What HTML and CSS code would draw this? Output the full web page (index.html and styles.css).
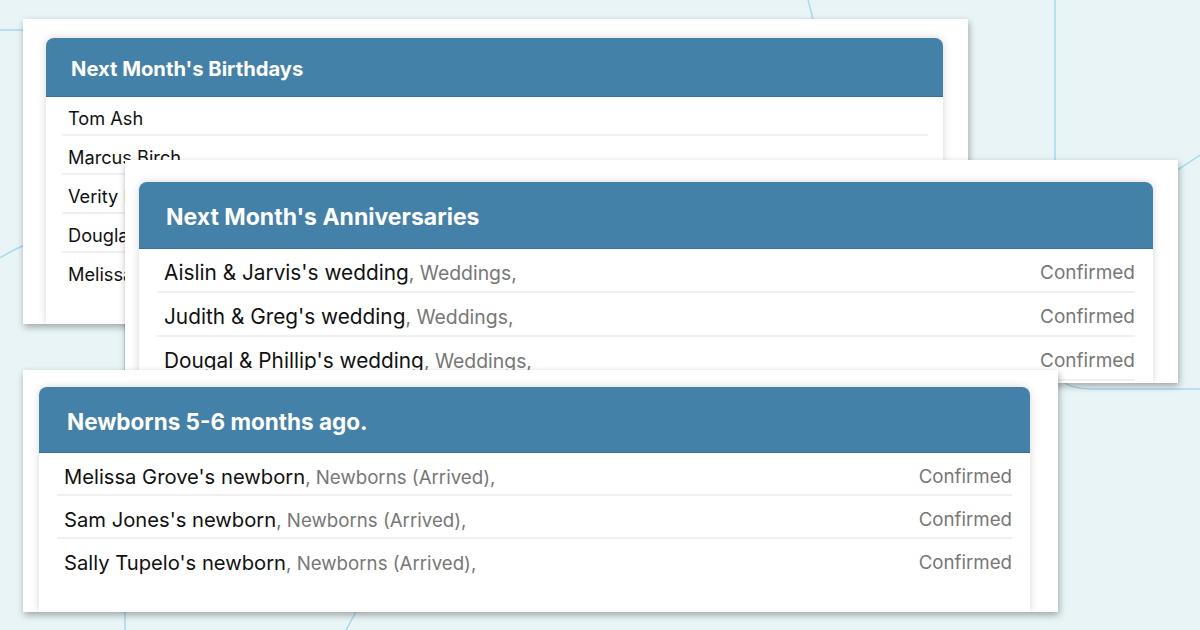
FILE: index.html
```html
<!DOCTYPE html>
<html lang="en">
<head>
<meta charset="utf-8">
<title>Upcoming events</title>
<link rel="stylesheet" href="styles.css">
</head>
<body>
<div class="canvas">
  <svg class="backdrop" width="1200" height="630" viewBox="0 0 1200 630" aria-hidden="true">
    <path d="M0 30 H60"/>
    <path d="M808 0 Q811 10 813 20"/>
    <path d="M1055 0 V170"/>
    <path d="M1170 175 Q1185 165 1200 155"/>
    <path d="M0 258 Q12 250 30 243"/>
    <path d="M125 300 V630"/>
    <path d="M357 610 L346 630"/>
    <path d="M1060 380 Q1072 389 1090 389 H1200"/>
  </svg>

  <section class="panel panel-birthdays">
    <div class="card card-sm">
      <h2 class="card-title">Next Month's Birthdays</h2>
      <ul class="rows">
        <li class="row"><span class="name">Tom Ash</span></li>
        <li class="row"><span class="name">Marcus Birch</span></li>
        <li class="row"><span class="name">Verity Lane</span></li>
        <li class="row"><span class="name">Douglas Reed</span></li>
        <li class="row"><span class="name">Melissa Grove</span></li>
      </ul>
    </div>
  </section>

  <section class="panel panel-anniversaries">
    <div class="card card-lg card-wide">
      <h2 class="card-title">Next Month's Anniversaries</h2>
      <ul class="rows rows-open">
        <li class="row"><span><span class="name">Aislin &amp; Jarvis's wedding</span><span class="meta">, Weddings,</span></span><span class="status">Confirmed</span></li>
        <li class="row"><span><span class="name">Judith &amp; Greg's wedding</span><span class="meta">, Weddings,</span></span><span class="status">Confirmed</span></li>
        <li class="row"><span><span class="name">Dougal &amp; Phillip's wedding</span><span class="meta">, Weddings,</span></span><span class="status">Confirmed</span></li>
      </ul>
    </div>
  </section>

  <section class="panel panel-newborns">
    <div class="card card-lg">
      <h2 class="card-title">Newborns 5-6 months ago.</h2>
      <ul class="rows">
        <li class="row"><span><span class="name">Melissa Grove's newborn</span><span class="meta">, Newborns (Arrived),</span></span><span class="status">Confirmed</span></li>
        <li class="row"><span><span class="name">Sam Jones's newborn</span><span class="meta">, Newborns (Arrived),</span></span><span class="status">Confirmed</span></li>
        <li class="row"><span><span class="name">Sally Tupelo's newborn</span><span class="meta">, Newborns (Arrived),</span></span><span class="status">Confirmed</span></li>
      </ul>
    </div>
  </section>
</div>
</body>
</html>
```

FILE: styles.css
```css
* {
  box-sizing: border-box;
}

html,
body {
  margin: 0;
  padding: 0;
}

body {
  width: 1200px;
  height: 630px;
  overflow: hidden;
  background: #e8f4f5;
  font-family: Inter, "Liberation Sans", sans-serif;
  color: #111;
}

.canvas {
  position: relative;
  width: 1200px;
  height: 630px;
}

/* thin network lines behind the windows */
.backdrop {
  position: absolute;
  left: 0;
  top: 0;
}

.backdrop path {
  fill: none;
  stroke: #a6daee;
  stroke-width: 1.5;
}

/* white screenshot-like windows laid over the canvas */
.panel {
  position: absolute;
  background: #fff;
  overflow: hidden;
  box-shadow: 1px 3px 7px rgba(0, 0, 0, 0.32);
}

.panel-birthdays {
  left: 23px;
  top: 19px;
  width: 945px;
  height: 305px;
  padding: 19px 25px 0 23px;
}

.panel-anniversaries {
  left: 125px;
  top: 160px;
  width: 1053px;
  height: 223px;
  padding: 22px 25px 0 14px;
}

.panel-newborns {
  left: 23px;
  top: 370px;
  width: 1035px;
  height: 242px;
  padding: 17px 28px 0 16px;
}

.card {
  height: 100%;
  background: #fff;
  border-radius: 8px 8px 0 0;
  box-shadow: 0 0 9px rgba(0, 0, 0, 0.16);
}

.card-title {
  margin: 0;
  display: flex;
  align-items: center;
  background: #4381a9;
  color: #fff;
  font-weight: 700;
  border-radius: 8px 8px 0 0;
  border-bottom: 1px solid #36709a;
}

.rows {
  list-style: none;
  margin: 0;
}

.row {
  display: flex;
  align-items: center;
  justify-content: space-between;
  border-bottom: 2px solid #f0f0f0;
}

.row:last-child {
  border-bottom-color: transparent;
}

.rows-open .row:last-child {
  border-bottom-color: #f0f0f0;
}

.meta,
.status {
  color: #777;
}

/* small card */
.card-sm .card-title {
  height: 59px;
  padding: 2px 0 0 25px;
  font-size: 20.2px;
}

.card-sm .rows {
  padding: 0 15px 0 16px;
}

.card-sm .row {
  height: 39px;
  padding: 4px 6px 0;
  font-size: 18.2px;
}

/* larger cards */
.card-lg .card-title {
  height: 66px;
  padding: 3px 0 0 28px;
  font-size: 22.5px;
}

.card-wide .card-title {
  height: 67px;
  padding-left: 27px;
  font-size: 23px;
}

.card-lg .rows {
  padding: 0 18px 0 18px;
}

.card-lg .row {
  height: 43px;
  padding: 5px 0 0 7px;
  font-size: 20.2px;
}

.card-lg .meta,
.card-lg .status {
  font-size: 18.7px;
}

.card-wide .row {
  height: 44px;
  font-size: 20.8px;
}

.card-wide .meta {
  font-size: 19.4px;
}

.card-wide .status {
  font-size: 19px;
}
```
